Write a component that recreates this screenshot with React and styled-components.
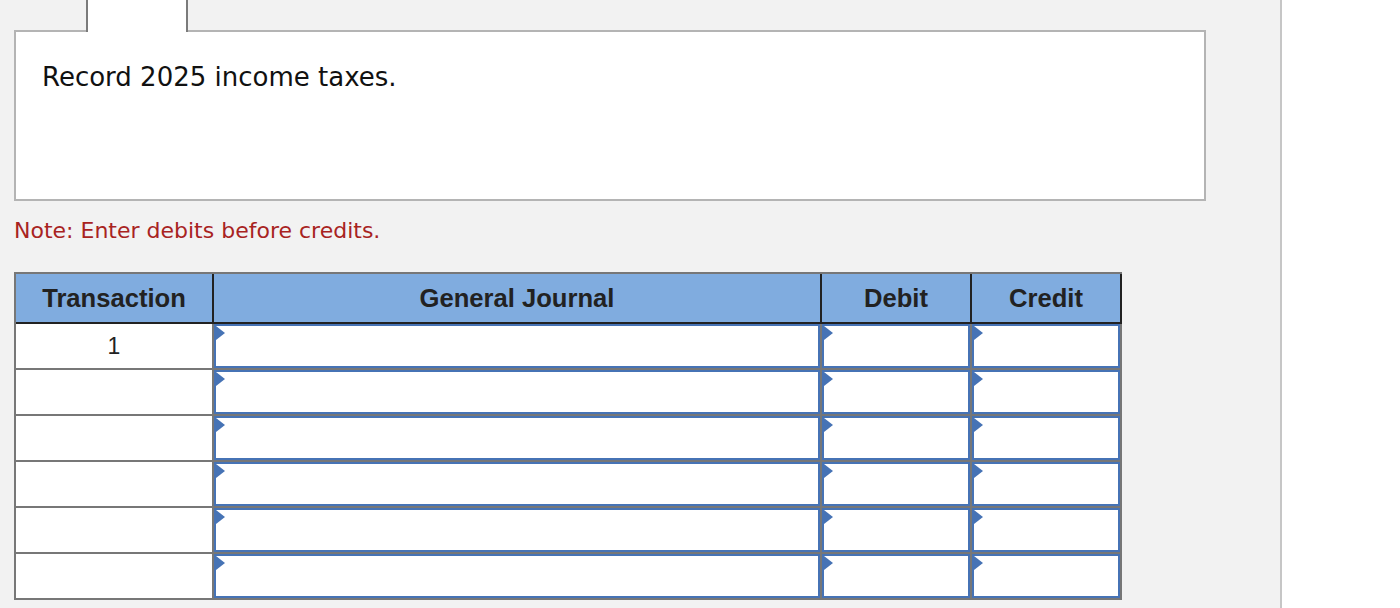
import React from 'react';
import styled, {createGlobalStyle} from 'styled-components';

const GlobalStyle = createGlobalStyle`
  html, body {
    margin: 0;
    padding: 0;
    background: #fff;
  }
`;

const Page = styled.div`
  display: flex;
  height: 608px;
  overflow: hidden;
`;

const Panel = styled.div`
  width: 1282px;
  flex-shrink: 0;
  background: #f2f2f2;
  border-right: 2px solid #c6c6c6;
  padding-left: 14px;
  box-sizing: border-box;
  font-family: "DejaVu Sans", Verdana, sans-serif;
`;

const Tab = styled.div`
  position: relative;
  z-index: 1;
  width: 98px;
  height: 32px;
  margin-left: 72px;
  margin-bottom: -2px;
  background: #fff;
  border-left: 2px solid #7b7b7b;
  border-right: 2px solid #7b7b7b;
`;

const Prompt = styled.div`
  width: 1192px;
  height: 171px;
  box-sizing: border-box;
  background: #fff;
  border: 2px solid #b4b4b4;
  padding: 30px 26px 0;
  font-size: 26px;
  color: #111;
`;

const Note = styled.p`
  margin: 17px 0 29px;
  font-size: 22px;
  line-height: 25px;
  color: #a8231f;
`;

const Journal = styled.table`
  border-collapse: separate;
  border-spacing: 0;
  table-layout: fixed;
  width: 1108px;
  border-top: 2px solid #777;
  border-left: 2px solid #777;
  font-family: "Liberation Sans", Arial, sans-serif;
`;

const Head = styled.th`
  box-sizing: border-box;
  width: ${p => p.w}px;
  height: 50px;
  padding: 0;
  background: #80acdf;
  color: #222;
  font-size: 25.6px;
  font-weight: bold;
  text-align: center;
  border-right: 2px solid #222;
  border-bottom: 2px solid #222;
`;

const Cell = styled.td`
  box-sizing: border-box;
  height: 46px;
  padding: 0;
  background: #fff;
  color: #222;
  font-size: 23px;
  text-align: center;
  border-right: 2px solid #777;
  border-bottom: 2px solid #777;
`;

const Entry = styled.div`
  position: relative;
  height: 44px;
  box-sizing: border-box;
  border: 2px solid #4673b5;
  background: #fff;

  &::before {
    content: '';
    position: absolute;
    top: 0;
    left: 0;
    border-top: 7.5px solid transparent;
    border-bottom: 7.5px solid transparent;
    border-left: 9px solid #4673b5;
  }
`;

const columns = [
  {label: 'Transaction', w: 198},
  {label: 'General Journal', w: 608},
  {label: 'Debit', w: 150},
  {label: 'Credit', w: 150},
];

const rows = ['1', '', '', '', '', ''];

export default function App() {
  return (
    <Page>
      <GlobalStyle />
      <Panel>
        <Tab />
        <Prompt>Record 2025 income taxes.</Prompt>
        <Note>Note: Enter debits before credits.</Note>
        <Journal>
          <thead>
            <tr>
              {columns.map(c => <Head key={c.label} w={c.w}>{c.label}</Head>)}
            </tr>
          </thead>
          <tbody>
            {rows.map((num, i) => (
              <tr key={i}>
                <Cell>{num}</Cell>
                <Cell><Entry /></Cell>
                <Cell><Entry /></Cell>
                <Cell><Entry /></Cell>
              </tr>
            ))}
          </tbody>
        </Journal>
      </Panel>
    </Page>
  );
}
